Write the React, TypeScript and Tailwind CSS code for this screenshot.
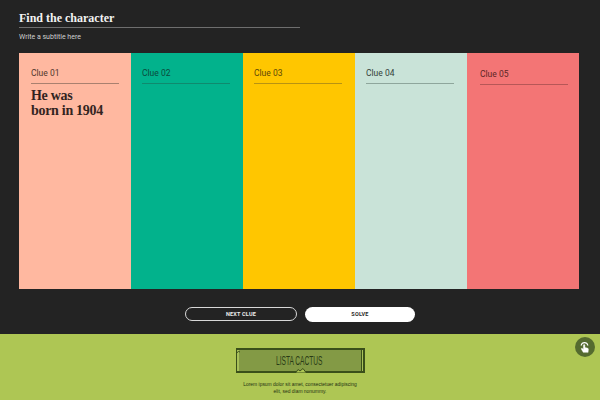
const clues = [
    { label: "Clue 01", bg: "bg-[#ffb8a0]", line: "border-[#a9806f]", text: "text-[#4f372d]", pad: "pl-3" },
    { label: "Clue 02", bg: "bg-[#02b28c]", line: "border-[#0f8a6e]", text: "text-[#0b4a3c]", pad: "pl-[11px]" },
    { label: "Clue 03", bg: "bg-[#ffc600]", line: "border-[#b89312]", text: "text-[#5c470a]", pad: "pl-[11px]" },
    { label: "Clue 04", bg: "bg-[#c9e3d8]", line: "border-[#8ea69c]", text: "text-[#333f3a]", pad: "pl-[11px]" },
    { label: "Clue 05", bg: "bg-[#f37575]", line: "border-[#b65757]", text: "text-[#5c2626]", pad: "pl-[13px]" },
];

function TouchIcon() {
    return (
        <svg viewBox="0 0 14 14" className="w-[14px] h-[14px]" fill="none" stroke="white" strokeLinecap="round">
            <path d="M3.2 5.2a3.4 3.4 0 0 1 6.6 0" strokeWidth="1.1" />
            <path
                d="M5.2 12.2 3.4 9.3c-.4-.7.4-1.3 1-.8l1 .9V5.3c0-1 1.5-1 1.5 0v2.3l2.4.5c.8.2 1.2.7 1.1 1.5l-.3 2.6z"
                fill="white"
                strokeWidth="0.4"
            />
        </svg>
    );
}

export default function App() {
    return (
        <div className="w-[600px] h-[400px] overflow-hidden bg-[#232323] font-['Roboto',sans-serif]">
            <header className="pl-[19px] pt-[11px] h-[53px]">
                <h1 className="w-[281px] h-[17px] border-b border-[#6e6e6e] font-['Liberation_Serif',serif] text-[12px] leading-[14px] font-bold text-[#f2f2f2]">
                    Find the character
                </h1>
                <p className="mt-[4px] text-[7px] leading-[10px] text-[#d0d0d0]">
                    Write a subtitle here
                </p>
            </header>

            <main className="ml-[19px] w-[560px] h-[236px] grid grid-cols-5">
                {clues.map((clue, index) => (
                    <div key={clue.label} className={`${clue.bg} ${clue.pad} pt-[14px]`}>
                        <div className={`w-[88px] h-[17px] border-b ${clue.line}`}>
                            <span className={`block text-[8.5px] leading-[12px] ${clue.text} ${index === 4 ? "mt-[1px]" : ""}`}>
                                {clue.label}
                            </span>
                        </div>
                        {index === 0 && (
                            <p className="mt-[4px] font-['Liberation_Serif',serif] text-[14px] leading-[15px] tracking-[-0.3px] font-bold text-[#33241f]">
                                He was
                                <br />
                                born in 1904
                            </p>
                        )}
                    </div>
                ))}
            </main>

            <div className="h-[45px] pt-[18px] flex items-start justify-center gap-2">
                <button className="w-[112px] h-[14px] rounded-full border border-[#d8d8d8] text-[5.5px] font-bold tracking-[0.2px] text-[#eeeeee]">
                    NEXT CLUE
                </button>
                <button className="w-[110px] h-[15px] rounded-full bg-white text-[5.5px] font-bold tracking-[0.2px] text-[#2a2a2a]">
                    SOLVE
                </button>
            </div>

            <section className="relative h-[66px] bg-[#aec654] flex flex-col items-center pt-[14px]">
                <div className="relative w-[129px] h-[25px] flex border-2 border-l border-[#3a4f1a] bg-[#839a45]">
                    <div className="w-[2px] bg-[#a8c159]" />
                    <div className="flex-1 flex items-center justify-center">
                        <span className="font-['Liberation_Sans',sans-serif] text-[12px] leading-none scale-x-[0.55] whitespace-nowrap text-[#2a3a16]">
                            LISTA CACTUS
                        </span>
                    </div>
                    <div className="w-[2px] bg-[#a8c159] border-l border-[#3a4f1a]" />
                    <svg viewBox="0 0 8 6" className="absolute top-[-2px] left-[-1px] w-[8px] h-[6px]">
                        <path d="M0 5.5 L0.5 1.5 L2 0.5 M0.5 5 L2.5 3.5 L4 4" fill="none" stroke="#3a4f1a" strokeWidth="1" />
                    </svg>
                    <svg viewBox="0 0 20 5" className="absolute bottom-[-2px] left-[54px] w-[20px] h-[5px]">
                        <path d="M0 4.5 L5 4.5 L7 1.5 L9 3 L12 0.5 L15 4.5 L20 4.5" fill="#aec654" stroke="#3a4f1a" strokeWidth="1" />
                    </svg>
                </div>
                <p className="mt-[8px] w-[144px] text-center font-['Liberation_Sans',sans-serif] text-[6px] leading-[7px] scale-x-[0.82] text-[#243012]">
                    Lorem ipsum dolor sit amet, consectetuer adipiscing elit, sed diam nonummy.
                </p>
                <div className="absolute right-[5px] top-[3px] w-[20px] h-[20px] rounded-full bg-[#556b2f] flex items-center justify-center">
                    <TouchIcon />
                </div>
            </section>
        </div>
    );
}
